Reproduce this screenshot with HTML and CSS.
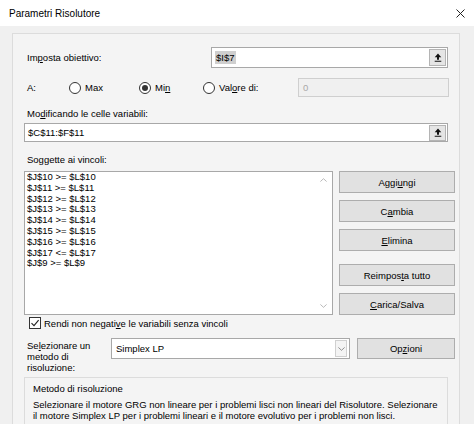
FILE: index.html
```html
<!DOCTYPE html>
<html>
  <head>
    <link rel="stylesheet" href="styles.css">
  </head>
  <body>
    <div class="window">
      <div class="titlebar">
        <span class="title">Parametri Risolutore</span>
        <svg class="close" viewBox="0 0 9 9"><path d="M0.5 0.5L8.5 8.5M8.5 0.5L0.5 8.5"/></svg>
      </div>
      <div class="client">
        <div class="panel">
          <div class="row objective">
            <span class="label">Im<u>p</u>osta obiettivo:</span>
            <div class="ref">
              <span class="ref-text"><span class="sel">$I$7</span></span>
              <span class="ref-btn">
                <svg viewBox="0 0 9 10"><path d="M4.5 0.5L0.8 4.6H3.4V7.6H5.6V4.6H8.2Z M0.8 8.6H8.2V9.8H0.8Z"/></svg>
              </span>
            </div>
          </div>

          <div class="row target">
            <span class="label target-label">A:</span>
            <span class="opt opt-max"><span class="radio"></span><span>Max</span></span>
            <span class="opt opt-min"><span class="radio on"></span><span>Mi<u>n</u></span></span>
            <span class="opt opt-value"><span class="radio"></span><span>Val<u>o</u>re di:</span></span>
            <span class="value-input">0</span>
          </div>

          <div class="caption">Mo<u>d</u>ificando le celle variabili:</div>
          <div class="ref changing">
            <span class="ref-text">$C$11:$F$11</span>
            <span class="ref-btn">
              <svg viewBox="0 0 9 10"><path d="M4.5 0.5L0.8 4.6H3.4V7.6H5.6V4.6H8.2Z M0.8 8.6H8.2V9.8H0.8Z"/></svg>
            </span>
          </div>

          <div class="caption caption-constraints">Soggette ai vincoli:</div>
          <div class="constraints">
            <div class="listbox">
              <div class="items">
                <div>$J$10 &gt;= $L$10</div>
                <div>$J$11 &gt;= $L$11</div>
                <div>$J$12 &gt;= $L$12</div>
                <div>$J$13 &gt;= $L$13</div>
                <div>$J$14 &gt;= $L$14</div>
                <div>$J$15 &gt;= $L$15</div>
                <div>$J$16 &gt;= $L$16</div>
                <div>$J$17 &lt;= $L$17</div>
                <div>$J$9 &gt;= $L$9</div>
              </div>
              <div class="scrollbar">
                <svg class="chev" viewBox="0 0 9 5"><path d="M0.5 4.5L4.5 0.8L8.5 4.5"/></svg>
                <svg class="chev" viewBox="0 0 9 5"><path d="M0.5 0.5L4.5 4.2L8.5 0.5"/></svg>
              </div>
            </div>
            <div class="buttons">
              <span class="btn">Aggi<u>u</u>ngi</span>
              <span class="btn">C<u>a</u>mbia</span>
              <span class="btn"><u>E</u>limina</span>
              <span class="btn btn-reset">Reimpos<u>t</u>a tutto</span>
              <span class="btn"><u>C</u>arica/Salva</span>
            </div>
          </div>

          <div class="row check-row">
            <span class="checkbox">
              <svg viewBox="0 0 10 10"><path d="M1.5 5.2L4 7.7L8.6 2.2"/></svg>
            </span>
            <span>Rendi non negati<u>v</u>e le variabili senza vincoli</span>
          </div>

          <div class="row method">
            <span class="method-label">Se<u>l</u>ezionare un<br>metodo di<br>risoluzione:</span>
            <div class="select">
              <span class="select-text">Simplex LP</span>
              <span class="drop">
                <svg viewBox="0 0 9 5"><path d="M0.5 0.5L4.5 4.2L8.5 0.5"/></svg>
              </span>
            </div>
            <span class="btn btn-options">Op<u>z</u>ioni</span>
          </div>

          <div class="group">
            <div class="group-title">Metodo di risoluzione</div>
            <p class="group-text">Selezionare il motore GRG non lineare per i problemi lisci non lineari del Risolutore. Selezionare<br>il motore Simplex LP per i problemi lineari e il motore evolutivo per i problemi non lisci.</p>
          </div>
        </div>
      </div>
    </div>
  </body>
</html>
```

FILE: styles.css
```css
/* Finestra di dialogo Risolutore */
* {
  box-sizing: border-box;
}
body {
  margin: 0;
  font-family: "Liberation Sans", Arial, sans-serif;
  font-size: 9.5px;
  color: #000;
  background-color: #f0f0f0;
}
u {
  text-underline-offset: 1px;
}
.window {
  width: 474px;
  height: 424px;
  overflow: hidden;
  background-color: #f0f0f0;
}
.titlebar {
  height: 26px;
  background-color: #fff;
  display: flex;
  align-items: center;
  justify-content: space-between;
  padding: 0 9px 0 9px;
}
.title {
  font-size: 10px;
}
.close {
  width: 9px;
  height: 9px;
  fill: none;
  stroke: #222;
  stroke-width: 1;
}
.client {
  padding: 7px 14px 0 12px;
}
.panel {
  height: 430px;
  border: 1px solid #dcdcdc;
  background-color: #f4f4f4;
  padding: 13px 4px 0 11px;
}
.row {
  display: flex;
  align-items: center;
}
.label {
  padding-left: 3px;
}

/* campi con pulsante di riferimento */
.ref {
  display: flex;
  align-items: center;
  background-color: #fff;
  border: 1px solid #a8a8a8;
  padding: 0 1px 0 3px;
}
.ref-text {
  flex: 1;
}
.sel {
  background-color: #cfcfcf;
  padding: 1px 1px;
}
.ref-btn {
  width: 17px;
  height: 17px;
  background-color: #e5e5e5;
  border: 1px solid #b4b4b4;
  display: flex;
  align-items: center;
  justify-content: center;
}
.ref-btn svg {
  width: 8px;
  height: 9px;
  fill: #111;
}
.objective {
  height: 21px;
}
.objective .ref {
  margin-left: auto;
  margin-right: 7px;
  width: 237px;
  height: 21px;
}
.changing {
  height: 19px;
  margin-top: 2px;
  margin-right: 7px;
}
.changing .ref-btn {
  height: 16px;
}

/* riga A: */
.target {
  height: 19px;
  margin-top: 10px;
}
.target-label {
  width: 45px;
}
.opt {
  display: flex;
  align-items: center;
  gap: 4px;
}
.opt-max {
  width: 70px;
}
.opt-min {
  width: 64px;
}
.opt-value {
  width: 95px;
}
.radio {
  width: 12px;
  height: 12px;
  border: 1px solid #333;
  border-radius: 50%;
  background-color: #fff;
  display: flex;
  align-items: center;
  justify-content: center;
}
.radio.on::after {
  content: "";
  width: 6px;
  height: 6px;
  border-radius: 50%;
  background-color: #333;
}
.value-input {
  width: 151px;
  height: 19px;
  border: 1px solid #cfcfcf;
  background-color: #f0f0f0;
  color: #a8a8a8;
  padding-left: 4px;
  display: flex;
  align-items: center;
}

.caption {
  padding-left: 3px;
  line-height: 14px;
  margin-top: 10px;
}
.caption-constraints {
  margin-top: 11px;
}

/* vincoli */
.constraints {
  display: flex;
  gap: 6px;
  margin-top: 4px;
}
.listbox {
  width: 309px;
  height: 144px;
  background-color: #fff;
  border: 1px solid #a8a8a8;
  display: flex;
}
.items {
  flex: 1;
  padding-left: 2px;
  line-height: 10.8px;
}
.scrollbar {
  width: 17px;
  display: flex;
  flex-direction: column;
  justify-content: space-between;
  align-items: center;
  padding: 6px 0;
}
.chev {
  width: 7px;
  height: 4px;
  fill: none;
  stroke: #a6a6a6;
  stroke-width: 1;
}
.buttons {
  width: 116px;
  display: flex;
  flex-direction: column;
  gap: 7px;
}
.btn {
  height: 22px;
  background-color: #e1e1e1;
  border: 1px solid #adadad;
  display: flex;
  align-items: center;
  justify-content: center;
}
.btn-reset {
  margin-top: 6px;
}

/* casella di controllo */
.check-row {
  height: 12px;
  margin-top: 2px;
  padding-left: 5px;
  gap: 3px;
}
.checkbox {
  width: 12px;
  height: 12px;
  border: 1px solid #333;
  background-color: #fff;
  display: flex;
  align-items: center;
  justify-content: center;
}
.checkbox svg {
  width: 10px;
  height: 10px;
  fill: none;
  stroke: #222;
  stroke-width: 1.1;
}

/* metodo */
.method {
  margin-top: 9px;
  align-items: flex-start;
}
.method-label {
  width: 87px;
  padding: 3px 0 0 3px;
  line-height: 10.8px;
}
.select {
  width: 239px;
  height: 21px;
  border: 1px solid #a8a8a8;
  background-color: #fff;
  display: flex;
  align-items: center;
  padding: 0 2px 0 4px;
}
.select-text {
  flex: 1;
}
.drop {
  width: 12px;
  height: 17px;
  border: 1px solid #d0d0d0;
  background-color: #f4f4f4;
  display: flex;
  align-items: center;
  justify-content: center;
}
.drop svg {
  width: 7px;
  height: 4px;
  fill: none;
  stroke: #777;
  stroke-width: 1;
}
.btn-options {
  margin-left: 7px;
  width: 98px;
  height: 21px;
}

.group {
  margin-top: 4px;
  margin-right: 7px;
  height: 80px;
  border: 1px solid #dcdcdc;
  padding: 5px 8px;
}
.group-title {
  line-height: 11px;
}
.group-text {
  margin: 5px 0 0 0;
  line-height: 11px;
  white-space: nowrap;
}
```
